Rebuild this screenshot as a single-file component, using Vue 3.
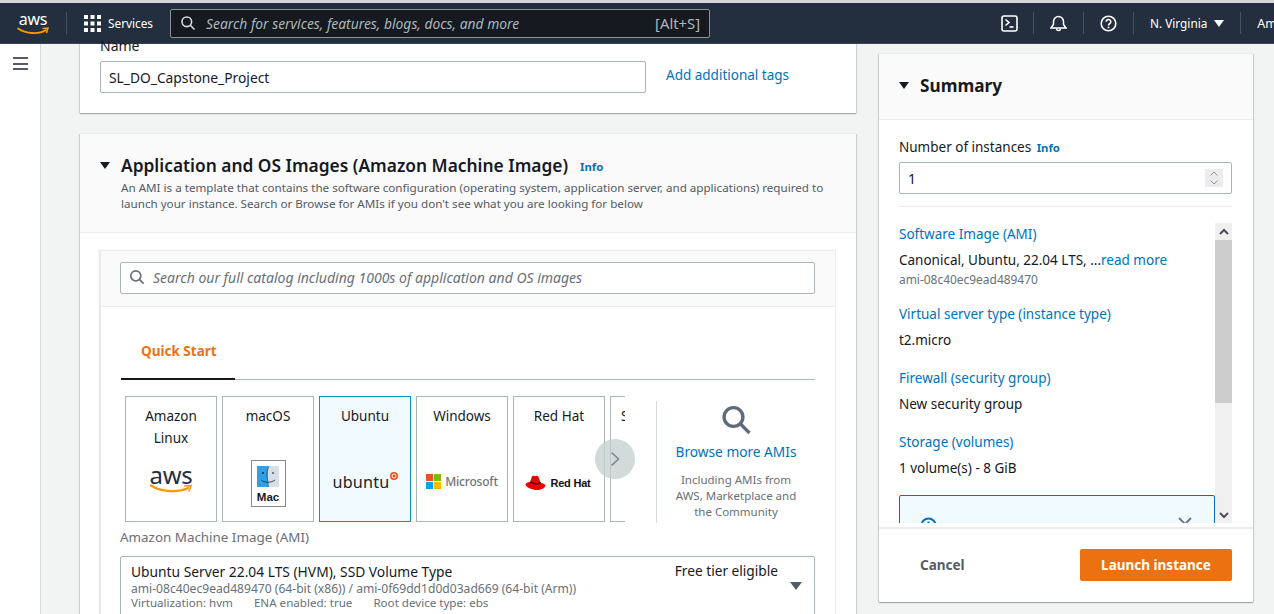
<script setup>
const tiles = [
  { name: 'Amazon Linux', logo: 'aws' },
  { name: 'macOS', logo: 'mac' },
  { name: 'Ubuntu', logo: 'ubuntu', selected: true },
  { name: 'Windows', logo: 'ms' },
  { name: 'Red Hat', logo: 'rh' },
]
const summary = [
  { link: 'Virtual server type (instance type)', value: 't2.micro' },
  { link: 'Firewall (security group)', value: 'New security group' },
  { link: 'Storage (volumes)', value: '1 volume(s) - 8 GiB' },
]
</script>

<template>
  <div class="page">
    <header class="nav">
      <div class="aws-logo">
        <span class="aws-word">aws</span>
        <svg class="aws-swoosh" width="32" height="8" viewBox="0 0 32 8"><path d="M1 1.5C9 7 22 7.5 29 3" fill="none" stroke="#ff9900" stroke-width="1.8" stroke-linecap="round"/><path d="M25.5 1.5L31 1L29.5 6" fill="none" stroke="#ff9900" stroke-width="1.5"/></svg>
      </div>
      <span class="nav-sep sep-logo"></span>
      <svg class="grid-icon" width="17" height="17" viewBox="0 0 17 17" fill="#fff"><rect x="0" y="0" width="4" height="4"/><rect x="6.5" y="0" width="4" height="4"/><rect x="13" y="0" width="4" height="4"/><rect x="0" y="6.5" width="4" height="4"/><rect x="6.5" y="6.5" width="4" height="4"/><rect x="13" y="6.5" width="4" height="4"/><rect x="0" y="13" width="4" height="4"/><rect x="6.5" y="13" width="4" height="4"/><rect x="13" y="13" width="4" height="4"/></svg>
      <span class="services">Services</span>
      <div class="nav-search">
        <svg width="16" height="16" viewBox="0 0 16 16" fill="none" stroke="#d5dbdb" stroke-width="1.6"><circle cx="6.8" cy="6.8" r="4.8"/><path d="M10.3 10.3L14.5 14.5"/></svg>
        <span class="nav-search-text">Search for services, features, blogs, docs, and more</span>
        <span class="nav-key">[Alt+S]</span>
      </div>
      <div class="nav-right">
        <span class="nav-cell cell-cloud">
          <svg width="17" height="17" viewBox="0 0 17 17" fill="none" stroke="#fff" stroke-width="1.6"><rect x="1" y="1" width="15" height="15" rx="2"/><path d="M4.5 4.5L8 7.5L4.5 10.5"/><path d="M8.5 12H12.5"/></svg>
        </span>
        <span class="nav-sep"></span>
        <span class="nav-cell cell-bell">
          <svg width="17" height="17" viewBox="0 0 17 17" fill="none" stroke="#fff" stroke-width="1.5"><path d="M1 13H16L13.5 9.5V6.5A5 5 0 0 0 3.5 6.5V9.5Z"/><path d="M6.5 13.5A2 2 0 0 0 10.5 13.5"/></svg>
        </span>
        <span class="nav-sep"></span>
        <span class="nav-cell cell-help">
          <svg width="17" height="17" viewBox="0 0 17 17" fill="none" stroke="#fff" stroke-width="1.6"><circle cx="8.5" cy="8.5" r="7.3"/><path d="M6.2 6.7A2.3 2.3 0 1 1 9.6 8.8C8.9 9.2 8.5 9.6 8.5 10.5"/><path d="M8.5 11.6V13.2"/></svg>
        </span>
        <span class="nav-sep"></span>
        <span class="region">N. Virginia</span>
        <span class="caret-white"></span>
        <span class="nav-sep sep-account"></span>
        <span class="account">Amazon</span>
      </div>
    </header>

    <div class="body">
      <aside class="sidebar">
        <span class="burger"><i></i><i></i><i></i></span>
      </aside>

      <main class="main">
        <div class="left-col">
          <section class="card name-card">
            <div class="name-label">Name</div>
            <div class="name-row">
              <div class="text-input name-input">SL_DO_Capstone_Project</div>
              <a class="link add-tags">Add additional tags</a>
            </div>
          </section>

          <section class="card os-card">
            <div class="os-head">
              <div class="os-title-row">
                <span class="caret-dark"></span>
                <h2 class="os-title">Application and OS Images (Amazon Machine Image)</h2>
                <a class="info info-os">Info</a>
              </div>
              <p class="os-desc">An AMI is a template that contains the software configuration (operating system, application server, and applications) required to launch your instance. Search or Browse for AMIs if you don't see what you are looking for below</p>
            </div>

            <div class="os-body">
              <div class="inner">
                <div class="inner-search">
                  <div class="text-input catalog">
                    <svg width="16" height="16" viewBox="0 0 16 16" fill="none" stroke="#687078" stroke-width="1.7"><circle cx="6.8" cy="6.8" r="5"/><path d="M10.4 10.4L14.6 14.6"/></svg>
                    <span>Search our full catalog including 1000s of application and OS images</span>
                  </div>
                </div>
                <div class="inner-content">
                  <div class="tabs"><span class="tab">Quick Start</span></div>
                  <div class="tile-row">
                    <div class="tile-strip">
                      <div class="tile-clip">
                        <div v-for="t in tiles" :key="t.name" class="tile" :class="{ selected: t.selected }">
                          <div class="tile-name">{{ t.name }}</div>
                          <div class="tile-logo">
                            <div v-if="t.logo === 'aws'" class="logo-aws">
                              <span>aws</span>
                              <svg width="42" height="10" viewBox="0 0 42 10"><path d="M1 1.5C11 8 28 9 38 4" fill="none" stroke="#ff9900" stroke-width="2.2" stroke-linecap="round"/><path d="M34 2L41 1.5L39 7.5" fill="none" stroke="#ff9900" stroke-width="1.6"/></svg>
                            </div>
                            <div v-else-if="t.logo === 'mac'" class="logo-mac">
                              <svg width="22" height="21" viewBox="0 0 22 21"><rect width="11" height="21" fill="#2f9fe8"/><rect x="11" width="11" height="21" fill="#d6dee6"/><path d="M12 0C9.5 6 9 10 10.5 13L11.5 21" fill="none" stroke="#1c5f9c" stroke-width=".8"/><circle cx="6" cy="7" r="1" fill="#123"/><circle cx="16" cy="7" r="1" fill="#556"/><path d="M4 14C8 17 14 17 18 14" fill="none" stroke="#234" stroke-width=".9"/></svg>
                              <span>Mac</span>
                            </div>
                            <div v-else-if="t.logo === 'ubuntu'" class="logo-ubuntu">
                              <span>ubuntu</span>
                              <svg width="8" height="8" viewBox="0 0 8 8"><circle cx="4" cy="4" r="4" fill="#e95420"/><circle cx="4" cy="4" r="2" fill="none" stroke="#fff" stroke-width=".9"/></svg>
                            </div>
                            <div v-else-if="t.logo === 'ms'" class="logo-ms">
                              <svg width="15" height="15" viewBox="0 0 15 15"><rect width="7" height="7" fill="#f25022"/><rect x="8" width="7" height="7" fill="#7fba00"/><rect y="8" width="7" height="7" fill="#00a4ef"/><rect x="8" y="8" width="7" height="7" fill="#ffb900"/></svg>
                              <span>Microsoft</span>
                            </div>
                            <div v-else class="logo-rh">
                              <svg width="21" height="16" viewBox="0 0 21 16"><path d="M5 7L7 1.5C7.5.5 9 .8 10 1.2C11.5.3 13 .5 13.5 2L15.5 7.5L20 9.5C21.5 11.5 18 14.5 13.5 15C8 15.5 1 12.5 0.5 9.5C.5 8 3 7 5 7Z" fill="#e00"/><path d="M4.8 7.2C8 9.5 12.5 10.5 16 8.2L15.6 7C12 8.5 8 8 5.1 6.4Z" fill="#111"/></svg>
                              <span>Red Hat</span>
                            </div>
                          </div>
                        </div>
                        <div class="tile tile-clipped"><div class="tile-name">SUSE Linux</div></div>
                      </div>
                      <span class="next-btn">
                        <svg width="10" height="16" viewBox="0 0 10 16" fill="none" stroke="#7d8998" stroke-width="1.7"><path d="M1.5 1.5L8.5 8L1.5 14.5"/></svg>
                      </span>
                    </div>
                    <div class="browse">
                      <svg width="30" height="30" viewBox="0 0 30 30" fill="none" stroke="#5f6b7a" stroke-width="3.4"><circle cx="12.5" cy="12" r="9.4"/><path d="M19.5 19L28.5 28"/></svg>
                      <a class="link browse-link">Browse more AMIs</a>
                      <p class="browse-note">Including AMIs from AWS, Marketplace and the Community</p>
                    </div>
                  </div>
                  <div class="ami-label">Amazon Machine Image (AMI)</div>
                  <div class="ami-select">
                    <div class="ami-main">
                      <div class="ami-name">Ubuntu Server 22.04 LTS (HVM), SSD Volume Type</div>
                      <div class="ami-sub">ami-08c40ec9ead489470 (64-bit (x86)) / ami-0f69dd1d0d03ad669 (64-bit (Arm))</div>
                      <div class="ami-sub ami-meta"><span>Virtualization: hvm</span><span>ENA enabled: true</span><span>Root device type: ebs</span></div>
                    </div>
                    <div class="ami-free">Free tier eligible</div>
                    <span class="caret-gray"></span>
                  </div>
                </div>
              </div>
            </div>
          </section>
        </div>

        <aside class="card summary">
          <div class="sum-head">
            <span class="caret-dark"></span>
            <h2 class="sum-title">Summary</h2>
          </div>
          <div class="sum-body">
            <div class="num-label">Number of instances <a class="info">Info</a></div>
            <div class="text-input num-input">
              <span>1</span>
              <span class="spinner">
                <svg width="10" height="16" viewBox="0 0 10 16" fill="none" stroke="#8d969e" stroke-width="1"><path d="M1.5 5.5L5 2L8.5 5.5"/><path d="M1.5 10.5L5 14L8.5 10.5"/></svg>
              </span>
            </div>
            <div class="sum-divider"></div>
            <div class="sum-scroll">
              <div class="sum-items">
                <div class="sum-item">
                  <a class="link">Software Image (AMI)</a>
                  <div class="sum-value">Canonical, Ubuntu, 22.04 LTS, ...<a class="link">read more</a></div>
                  <div class="sum-ami">ami-08c40ec9ead489470</div>
                </div>
                <div v-for="s in summary" :key="s.link" class="sum-item">
                  <a class="link">{{ s.link }}</a>
                  <div class="sum-value">{{ s.value }}</div>
                </div>
                <div class="notice">
                  <svg class="notice-icon" width="17" height="17" viewBox="0 0 17 17" fill="none" stroke="#0073bb" stroke-width="2"><circle cx="8.5" cy="8.5" r="7"/><path d="M8.5 4.5V6"/></svg>
                  <svg class="notice-x" width="14" height="14" viewBox="0 0 14 14" fill="none" stroke="#687078" stroke-width="1.8"><path d="M1 1L13 13M13 1L1 13"/></svg>
                </div>
              </div>
              <div class="scrollbar">
                <span class="sb-btn"><svg width="10" height="7" viewBox="0 0 10 7" fill="none" stroke="#50505a" stroke-width="2"><path d="M1 6L5 2L9 6"/></svg></span>
                <span class="sb-thumb"></span>
                <span class="sb-track"></span>
                <span class="sb-btn"><svg width="10" height="7" viewBox="0 0 10 7" fill="none" stroke="#50505a" stroke-width="2"><path d="M1 1L5 5L9 1"/></svg></span>
              </div>
            </div>
          </div>
          <div class="sum-foot">
            <span class="cancel">Cancel</span>
            <span class="launch">Launch instance</span>
          </div>
        </aside>
      </main>
    </div>
  </div>
</template>

<style>
html, body { margin: 0; padding: 0; background: #f2f3f3; overflow: hidden; }
</style>

<style scoped>
* { box-sizing: border-box; }
.page { width: 1274px; height: 614px; overflow: hidden; display: flex; flex-direction: column; background: #f2f3f3; font-family: "Noto Sans", "Open Sans", sans-serif; font-size: 14px; color: #16191f; }
p, h2 { margin: 0; }
.link { color: #0073bb; }

.nav { flex: none; height: 44px; border-top: 3px solid #d5d5d8; background: #232f3e; display: flex; align-items: center; color: #fff; white-space: nowrap; border-bottom: 1px solid #3a4655; }
.aws-logo { width: 32px; margin-left: 17px; display: flex; flex-direction: column; align-items: center; height: 26px; }
.aws-word { font-size: 16px; line-height: 18px; letter-spacing: -.2px; }
.aws-swoosh { margin-top: -1px; }
.nav-sep { width: 1px; height: 22px; background: #465161; flex: none; }
.sep-logo { margin-left: 17px; }
.grid-icon { margin-left: 17px; }
.services { font-size: 11.8px; margin-left: 7px; }
.nav-search { margin-left: 17px; width: 540px; height: 29px; background: #16191f; border: 1px solid #879596; border-radius: 2px; display: flex; align-items: center; padding: 0 9px 0 9px; }
.nav-search-text { font-style: italic; color: #aab7b8; font-size: 13.85px; margin-left: 10px; flex: 1; }
.nav-key { color: #aab7b8; font-size: 14.8px; }
.nav-right { flex: 1; display: flex; align-items: center; min-width: 0; overflow: hidden; margin-left: 283px; }
.nav-cell { display: flex; align-items: center; justify-content: center; flex: none; }
.cell-cloud { width: 33px; margin-right: 7px; }
.cell-bell { width: 49px; }
.cell-help { width: 49px; }
.region { font-size: 11.8px; margin-left: 16px; }
.caret-white { width: 0; height: 0; border-left: 5px solid transparent; border-right: 5px solid transparent; border-top: 7px solid #fff; margin-left: 7px; }
.sep-account { margin-left: 16px; }
.account { font-size: 12.5px; margin-left: 16px; }

.body { flex: 1; min-height: 0; display: flex; }
.sidebar { width: 41px; flex: none; background: #fff; border-right: 1px solid #d5dbdb; padding: 13px 0 0 13px; }
.burger { display: flex; flex-direction: column; gap: 3.5px; width: 15px; }
.burger i { display: block; height: 2px; background: #545b64; }
.main { flex: 1; min-width: 0; display: flex; gap: 23px; padding-left: 39px; align-items: flex-start; }
.left-col { width: 776px; flex: none; display: flex; flex-direction: column; gap: 21px; }
.card { background: #fff; box-shadow: 0 1px 1px rgba(0,28,36,.3), 1px 0 1px rgba(0,28,36,.12), -1px 0 1px rgba(0,28,36,.12); }
.text-input { background: #fff; border: 1px solid #aab7b8; border-radius: 2px; display: flex; align-items: center; }

.name-card { height: 69px; padding: 0 20px; }
.name-label { font-size: 14px; line-height: 16px; height: 17px; margin-top: -6px; }
.name-row { display: flex; align-items: flex-start; margin-top: 6px; }
.name-input { width: 546px; height: 32px; padding-left: 8px; font-size: 13.8px; }
.add-tags { margin-left: 20px; font-size: 13.5px; line-height: 28px; }

.os-card { height: 520px; }
.os-head { height: 99px; background: #fafafa; border-bottom: 1px solid #eaeded; padding: 20px 20px 0 20px; }
.os-title-row { display: flex; align-items: center; height: 22px; }
.caret-dark { width: 0; height: 0; border-left: 5.5px solid transparent; border-right: 5.5px solid transparent; border-top: 7px solid #16191f; flex: none; }
.os-title { font-size: 17.35px; line-height: 22px; font-weight: 600; margin-left: 11px; }
.info { color: #0073bb; font-size: 11.3px; font-weight: 700; }
.info-os { margin-left: 12px; margin-top: 3px; }
.os-desc { font-size: 11.63px; line-height: 16px; color: #545b64; margin: 4px 0 0 21px; width: 720px; }
.os-body { padding: 17px 20px 0 20px; }
.inner { border: 1px solid #eaeded; border-bottom: 0; box-shadow: -1px 0 1px rgba(0,28,36,.1); height: 400px; }
.inner-search { height: 56px; background: #fafafa; border-bottom: 1px solid #eaeded; padding: 11px 20px 0 19px; }
.catalog { height: 32px; padding: 0 0 2px 8px; gap: 8px; font-style: italic; color: #687078; font-size: 14px; }
.inner-content { padding: 0 20px 0 19px; }
.tabs { height: 73px; border-bottom: 1px solid #aab7b8; display: flex; align-items: flex-end; margin-left: 1px; }
.tab { display: block; width: 114px; height: 46px; margin-bottom: -1px; padding: 8px 0 0 20px; border-bottom: 2px solid #16191f; color: #ec7211; font-weight: 700; font-size: 13.5px; line-height: 18px; }
.tile-row { display: flex; margin-top: 16px; height: 126px; }
.tile-strip { width: 500px; flex: none; margin-left: 5px; position: relative; }
.tile-clip { width: 500px; height: 126px; display: flex; gap: 5px; overflow: hidden; }
.tile { width: 92px; height: 126px; flex: none; border: 1px solid #aab7b8; display: flex; flex-direction: column; background: #fff; padding-top: 8px; }
.tile.selected { background: #f1faff; border-color: #0096bf; }
.tile-clipped { white-space: nowrap; padding-left: 10px; }
.tile-name { font-size: 13.5px; line-height: 22px; height: 44px; text-align: center; padding: 0 12px; }
.tile-clipped .tile-name { text-align: left; padding: 0; }
.tile-logo { flex: 1; display: flex; align-items: center; justify-content: center; padding-bottom: 3px; }
.next-btn { position: absolute; left: 470px; top: 43px; width: 40px; height: 40px; border-radius: 50%; background: rgba(195,205,205,.75); display: flex; align-items: center; justify-content: center; padding-left: 0; }
.logo-aws { display: flex; flex-direction: column; align-items: center; margin-top: -9px; }
.logo-aws span { font-size: 24px; line-height: 22px; letter-spacing: -.3px; color: #232f3e; }
.logo-aws svg { margin-top: -2px; }
.logo-mac { width: 35px; height: 47px; border: 1px solid #8a8a8a; display: flex; flex-direction: column; align-items: center; padding-top: 5px; background: #fff; margin-top: -1px; }
.logo-mac span { font-family: "Liberation Sans", sans-serif; font-size: 11.5px; font-weight: 700; line-height: 14px; margin-top: 3px; }
.logo-ubuntu { display: flex; align-items: flex-start; margin-top: -4px; }
.logo-ubuntu span { font-size: 16.2px; line-height: 20px; letter-spacing: .2px; color: #222; }
.logo-ms { display: flex; align-items: center; gap: 4px; margin-top: -4px; }
.logo-ms span { font-size: 12px; color: #737373; font-weight: 500; letter-spacing: -.2px; }
.logo-rh { display: flex; align-items: center; gap: 4px; margin-top: -2px; margin-left: -2px; }
.logo-rh span { font-family: "Liberation Sans", sans-serif; font-size: 11px; font-weight: 700; color: #111; letter-spacing: -.2px; white-space: nowrap; }
.browse { flex: 1; height: 122px; margin-top: 5px; margin-left: 31px; border-left: 1px solid #d5dbdb; display: flex; flex-direction: column; align-items: center; min-width: 0; }
.browse svg { margin-top: 4px; flex: none; }
.browse-link { font-size: 13.7px; line-height: 18px; margin-top: 8px; }
.browse-note { font-size: 11.5px; line-height: 16px; color: #687078; text-align: center; margin-top: 11px; width: 130px; }
.ami-label { font-size: 13.4px; color: #687078; margin-top: 5px; line-height: 20px; }
.ami-select { margin-top: 9px; height: 70px; border: 1px solid #aab7b8; border-radius: 2px 2px 0 0; display: flex; padding: 5px 10px; position: relative; }
.ami-main { flex: 1; }
.ami-name { font-size: 13.8px; line-height: 21px; margin-top: -1px; }
.ami-sub { font-size: 12.1px; line-height: 14px; color: #687078; }
.ami-meta { display: flex; gap: 21px; font-size: 11.6px; }
.ami-free { font-size: 13.7px; line-height: 19px; margin: -1px 26px 0 0; }
.caret-gray { position: absolute; right: 12px; top: 25px; width: 0; height: 0; border-left: 6px solid transparent; border-right: 6px solid transparent; border-top: 8px solid #545b64; }

.summary { width: 374px; flex: none; height: 548px; margin-top: 10px; display: flex; flex-direction: column; }
.sum-head { height: 66px; background: #fafafa; border-bottom: 1px solid #eaeded; display: flex; align-items: center; padding: 0 0 2px 20px; }
.sum-title { font-size: 17.2px; font-weight: 700; margin-left: 11px; line-height: 22px; }
.sum-body { height: 403px; flex: none; padding: 17px 21px 0 20px; overflow: hidden; }
.num-label { font-size: 13.5px; line-height: 20px; }
.num-label .info { margin-left: 2px; }
.num-input { height: 32px; margin-top: 4px; padding: 0 8px; justify-content: space-between; font-size: 14px; }
.spinner { width: 18px; height: 18px; background: #eaedf0; display: flex; align-items: center; justify-content: center; }
.sum-divider { height: 1px; background: #eaeded; margin-top: 12px; }
.sum-scroll { display: flex; height: 301px; margin-top: 16px; overflow: hidden; }
.sum-items { width: 316px; flex: none; padding-top: 1px; }
.sum-item { font-size: 13.5px; line-height: 20px; margin-bottom: 18px; }
.sum-value { margin-top: 6px; }
.sum-ami { font-size: 11.95px; color: #687078; line-height: 16px; margin-top: 2px; }
.sum-item:first-child { margin-bottom: 16px; }
.notice { height: 60px; margin-top: -1px; width: 316px; background: #f1faff; border: 1px solid #0073bb; border-radius: 2px; position: relative; }
.notice-icon { position: absolute; left: 20px; top: 21px; }
.notice-x { position: absolute; left: 278px; top: 21px; }
.scrollbar { flex: 1; background: #f0f0f0; display: flex; flex-direction: column; }
.sb-btn { height: 17px; flex: none; display: flex; align-items: center; justify-content: center; }
.sb-thumb { height: 163px; flex: none; background: #cdcdcd; }
.sb-track { flex: 1; }
.sum-foot { flex: 1; margin-top: 4px; border-top: 2px solid #eaeded; display: flex; justify-content: space-between; align-items: flex-start; padding: 20px 21px 0 41px; }
.cancel { font-weight: 700; font-size: 13.5px; color: #545b64; line-height: 32px; }
.launch { width: 152px; height: 32px; background: #ec7211; border-radius: 2px; color: #fff; font-weight: 700; font-size: 13.5px; display: flex; align-items: center; justify-content: center; }
</style>
